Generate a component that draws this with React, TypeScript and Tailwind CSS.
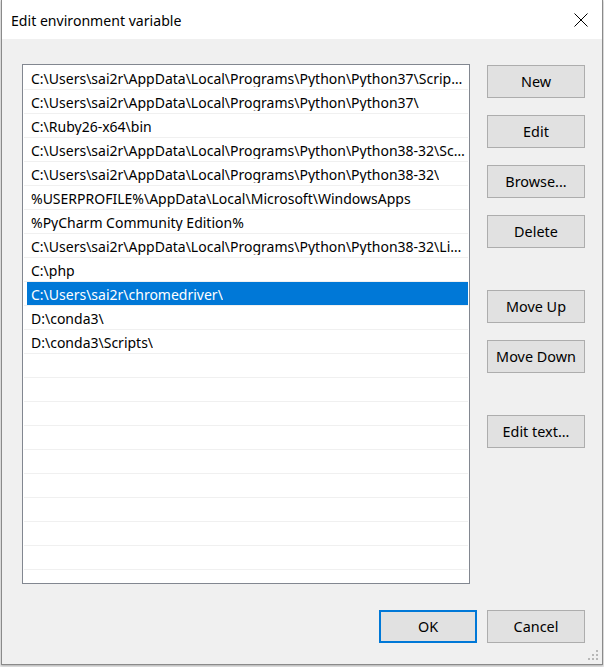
import React from "react";

const paths = [
  "C:\\Users\\sai2r\\AppData\\Local\\Programs\\Python\\Python37\\Scripts\\",
  "C:\\Users\\sai2r\\AppData\\Local\\Programs\\Python\\Python37\\",
  "C:\\Ruby26-x64\\bin",
  "C:\\Users\\sai2r\\AppData\\Local\\Programs\\Python\\Python38-32\\Scripts\\",
  "C:\\Users\\sai2r\\AppData\\Local\\Programs\\Python\\Python38-32\\",
  "%USERPROFILE%\\AppData\\Local\\Microsoft\\WindowsApps",
  "%PyCharm Community Edition%",
  "C:\\Users\\sai2r\\AppData\\Local\\Programs\\Python\\Python38-32\\Lib\\site-packages\\",
  "C:\\php",
  "C:\\Users\\sai2r\\chromedriver\\",
  "D:\\conda3\\",
  "D:\\conda3\\Scripts\\",
];

const SELECTED = 9;
const TOTAL_ROWS = 22;

const Btn = ({ label, className = "", primary = false }: { label: string; className?: string; primary?: boolean }) => (
  <button
    className={`w-[98px] h-[33px] flex items-center justify-center bg-[#e1e1e1] text-[14.4px] text-black ${
      primary ? "border-2 border-[#0078d7]" : "border border-[#adadad]"
    } ${className}`}
  >
    <span className="pt-px">{label}</span>
  </button>
);

export default function App() {
  const rows = Array.from({ length: TOTAL_ROWS }, (_, i) => paths[i] ?? "");

  return (
    <div
      className="w-[604px] h-[667px] bg-[#ececec] overflow-hidden"
      style={{ fontFamily: '"Noto Sans", "Open Sans", sans-serif' }}
    >
      <div className="ml-px w-[602px] h-[665px] flex flex-col border-x border-b border-[#8a8a8a] shadow-[0_1px_2px_rgba(0,0,0,0.25)]">
        {/* title bar */}
        <div className="h-[39px] bg-white flex items-center justify-between pl-[9px] pr-[14px] shrink-0">
          <span className="text-[14.1px] text-black leading-none pt-[3px]">Edit environment variable</span>
          <svg width="14" height="14" viewBox="0 0 14 14" className="mt-px">
            <path d="M0.5 0.5 L13.5 13.5 M13.5 0.5 L0.5 13.5" stroke="#000" strokeWidth="1" />
          </svg>
        </div>

        {/* body */}
        <div className="relative flex-1 bg-[#f0f0f0] flex flex-col pl-[20px] pr-[17px] pt-[25px]">
          <div className="flex">
            <div className="w-[448px] h-[520px] bg-white border border-[#828790] pt-px overflow-hidden">
              {rows.map((p, i) => (
                <div key={i} className="h-[24px] mx-px border-b border-[#f0f0f0]">
                  <div
                    className={`h-[23px] ml-[3px] pl-[4px] pr-[2px] flex items-center text-[14px] leading-none ${
                      i === SELECTED ? "bg-[#0078d7] text-white" : "text-black"
                    }`}
                  >
                    <span className="block truncate pt-[3px] pb-px">{p}</span>
                  </div>
                </div>
              ))}
            </div>

            <div className="ml-[17px] pt-px flex flex-col">
              <Btn label="New" />
              <Btn label="Edit" className="mt-[17px]" />
              <Btn label="Browse..." className="mt-[17px]" />
              <Btn label="Delete" className="mt-[17px]" />
              <Btn label="Move Up" className="mt-[42px]" />
              <Btn label="Move Down" className="mt-[17px]" />
              <Btn label="Edit text..." className="mt-[42px]" />
            </div>
          </div>

          <div className="flex justify-end gap-[10px] mt-[26px]">
            <Btn label="OK" primary />
            <Btn label="Cancel" />
          </div>

          {/* resize grip */}
          <svg width="12" height="12" viewBox="0 0 12 12" className="absolute right-[2px] bottom-[2px]">
            <rect x="8" y="0" width="2" height="2" fill="#b8b8b8" />
            <rect x="4" y="4" width="2" height="2" fill="#b8b8b8" />
            <rect x="8" y="4" width="2" height="2" fill="#b8b8b8" />
            <rect x="0" y="8" width="2" height="2" fill="#b8b8b8" />
            <rect x="4" y="8" width="2" height="2" fill="#b8b8b8" />
            <rect x="8" y="8" width="2" height="2" fill="#b8b8b8" />
          </svg>
        </div>
      </div>
    </div>
  );
}
